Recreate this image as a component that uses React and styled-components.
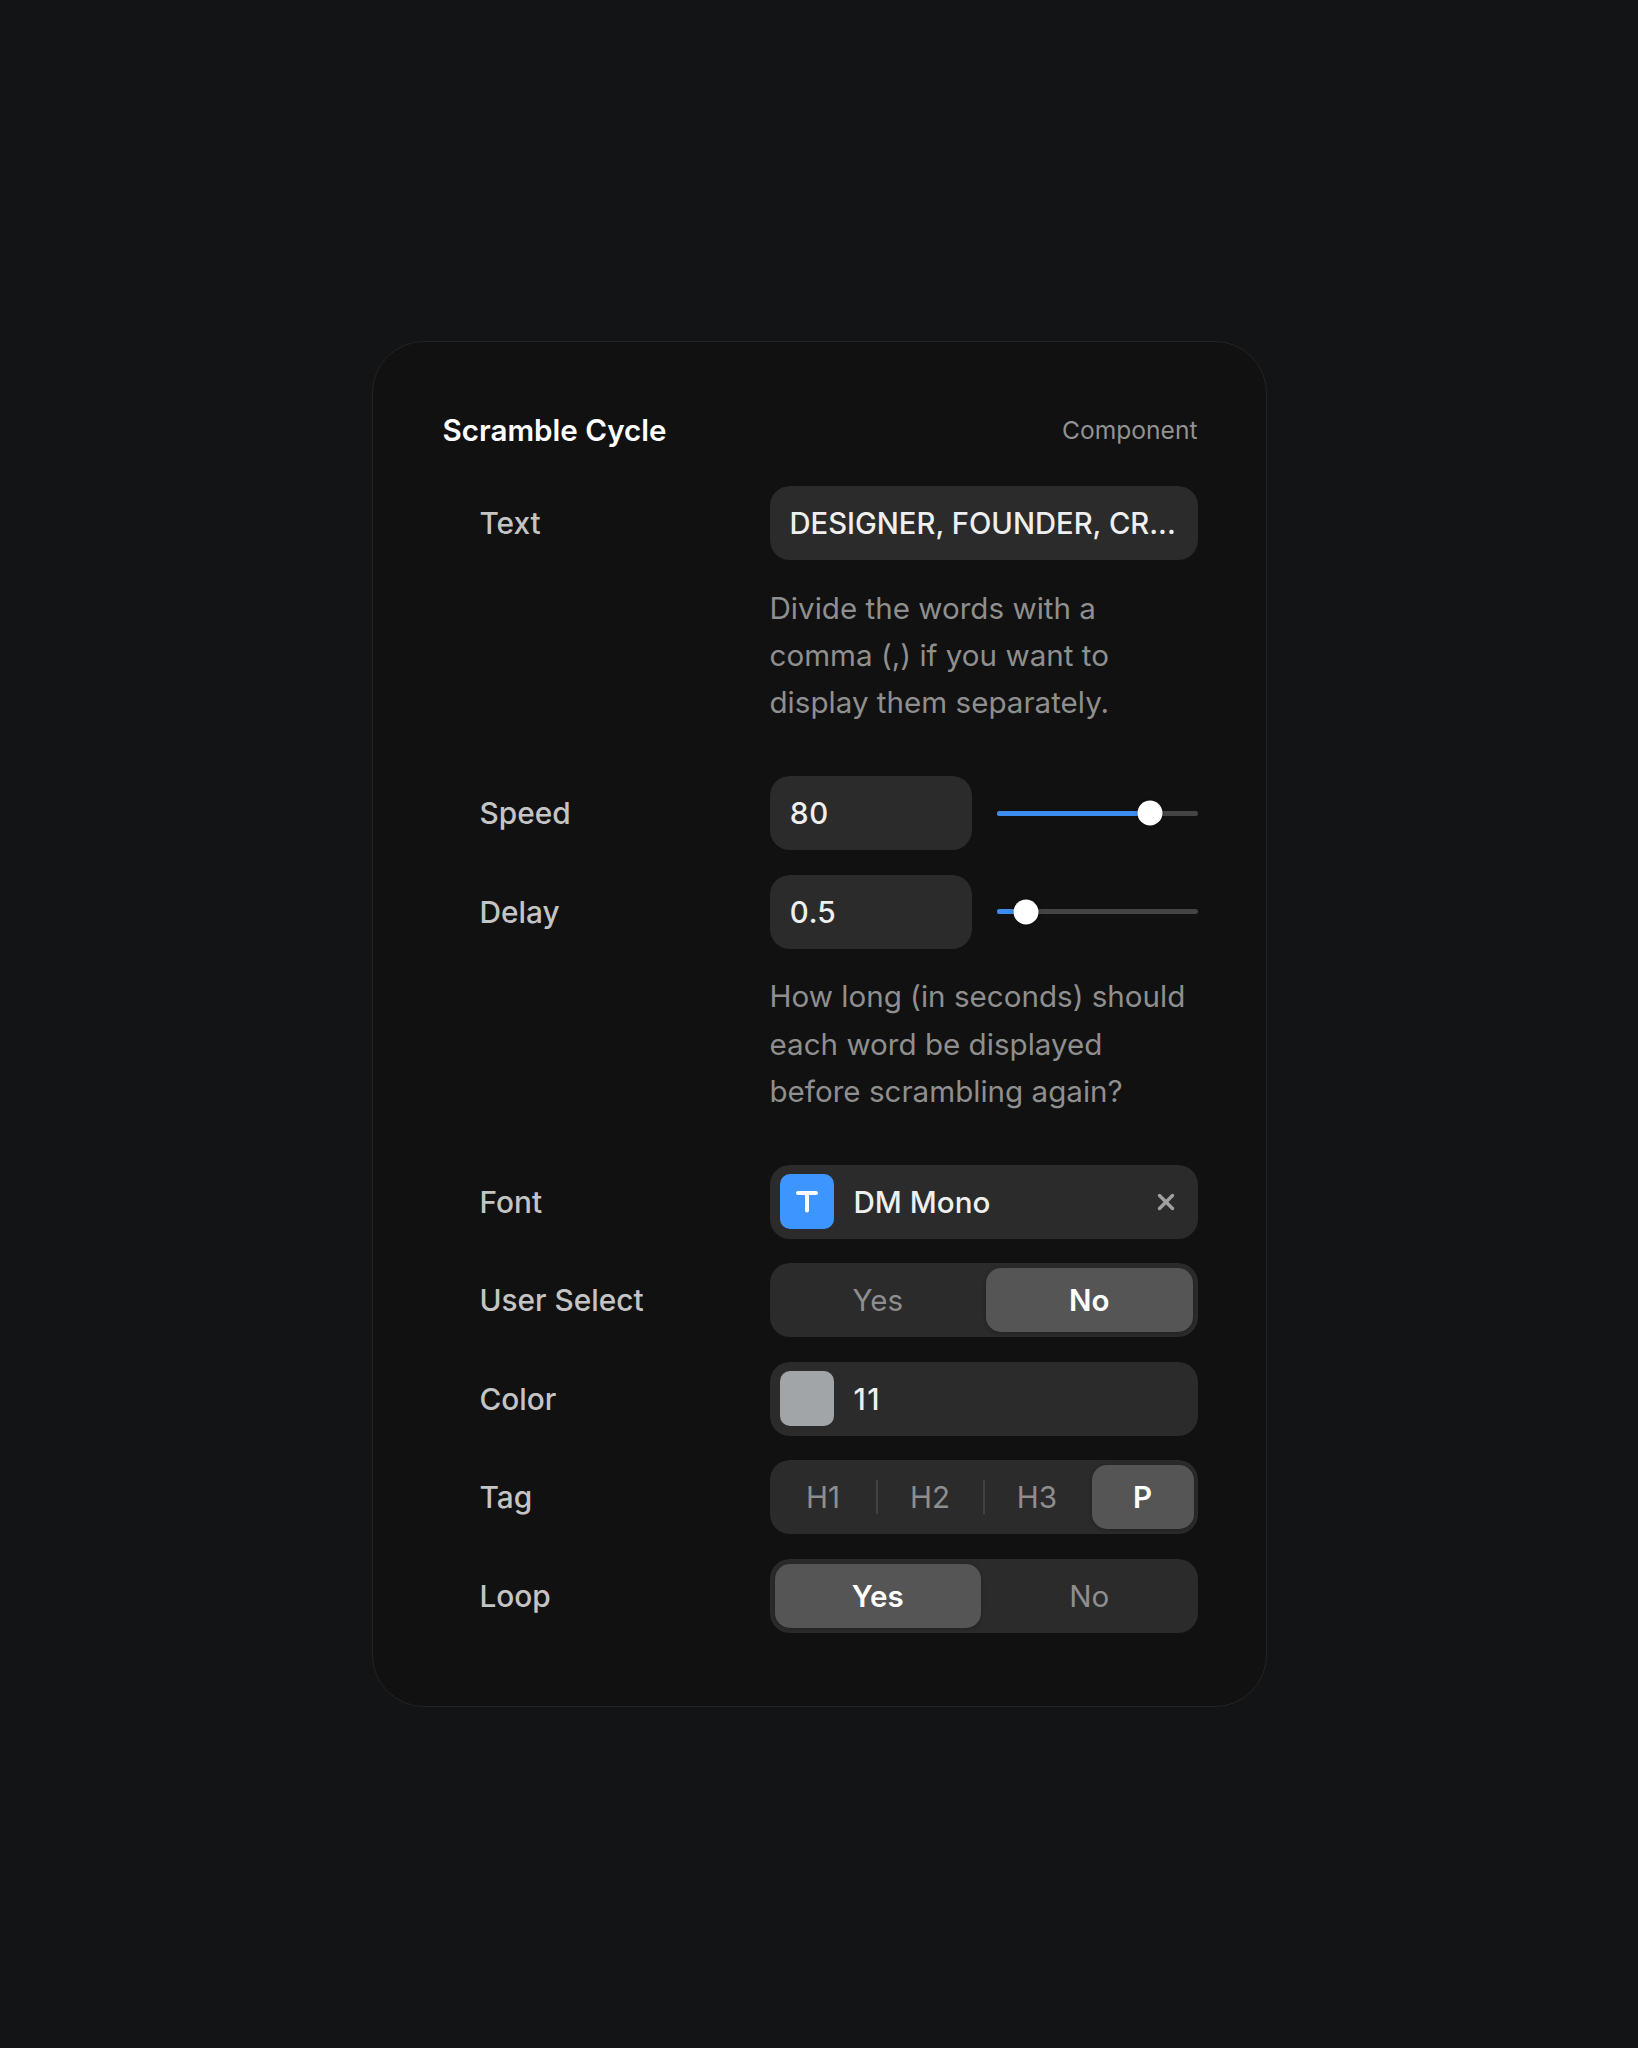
import React from 'react';
import styled, { createGlobalStyle } from 'styled-components';

const GlobalStyle = createGlobalStyle`
  html, body {
    margin: 0;
    background: #121416;
  }
`;

const Page = styled.div`
  width: 100%;
  height: 2048px;
  display: flex;
  align-items: center;
  justify-content: center;
  font-family: Inter, "Liberation Sans", sans-serif;
`;

const Card = styled.section`
  box-sizing: border-box;
  width: 895px;
  padding: 70px 68px 73.6px 70px;
  background: #111111;
  border: 1px solid #232427;
  border-radius: 52px;
`;

const Header = styled.header`
  display: flex;
  align-items: center;
  justify-content: space-between;
  height: 36px;
  margin-bottom: 38.5px;
`;

const Title = styled.h1`
  margin: 0;
  font-size: 29.6px;
  font-weight: 600;
  color: #ffffff;
`;

const Kind = styled.span`
  font-size: 24.6px;
  color: #929292;
`;

const Form = styled.div`
  display: flex;
  flex-direction: column;
  gap: 24.5px;
`;

const Row = styled.div`
  display: grid;
  grid-template-columns: 327px minmax(0, 1fr);
  align-items: center;
  min-height: 74px;
`;

const Label = styled.label`
  padding-left: 37px;
  font-size: 29.8px;
  font-weight: 450;
  color: #c4c4c4;
`;

const Field = styled.div`
  box-sizing: border-box;
  display: flex;
  align-items: center;
  height: 74px;
  padding: 0 20px;
  border-radius: 20px;
  background: #2b2b2b;
  font-size: 29.2px;
  font-weight: 450;
  white-space: nowrap;
  color: #efefef;
`;

const NumberField = styled(Field)`
  font-size: 30px;
  font-variant-numeric: tabular-nums;
`;

const Help = styled.p`
  margin: 0 0 25px 327px;
  font-size: 29.6px;
  line-height: 47.3px;
  color: #8f8f8f;
`;

const NumberGroup = styled.div`
  display: grid;
  grid-template-columns: 202px 1fr;
  gap: 25px;
  align-items: center;
`;

const Track = styled.div`
  position: relative;
  height: 5px;
  border-radius: 3px;
  background: #444444;
`;

const Fill = styled.div`
  height: 100%;
  width: ${(p) => p.$value}%;
  border-radius: 3px 0 0 3px;
  background: #3d8df0;
`;

const Thumb = styled.div`
  position: absolute;
  top: 50%;
  left: ${(p) => p.$value}%;
  width: 25px;
  height: 25px;
  border-radius: 50%;
  background: #ffffff;
  box-shadow: 0 0 3px rgba(0, 0, 0, 0.5);
  transform: translate(-50%, -50%);
`;

const PickerField = styled(Field)`
  padding: 0 23px 0 10px;
  gap: 20px;
  font-size: 29.6px;
`;

const Tile = styled.div`
  flex: none;
  display: flex;
  align-items: center;
  justify-content: center;
  width: 54px;
  height: 55px;
  border-radius: 10px;
  background: ${(p) => p.$color};
`;

const PickerName = styled.span`
  flex: 1;
  letter-spacing: ${(p) => (p.$numeric ? '1.5px' : 'normal')};
`;

const Segments = styled.div`
  box-sizing: border-box;
  display: grid;
  grid-template-columns: repeat(${(p) => p.$count}, 1fr);
  gap: 5px;
  height: 74px;
  padding: 5px;
  border-radius: 20px;
  background: #2b2b2b;
`;

const Segment = styled.div`
  display: flex;
  align-items: center;
  justify-content: center;
  border-radius: 15px;
  font-size: 29.6px;
  font-weight: ${(p) => (p.$active ? 600 : 400)};
  color: ${(p) => (p.$active ? '#ffffff' : '#8e8e8e')};
  background: ${(p) => (p.$active ? '#555555' : 'transparent')};
  box-shadow: ${(p) => (p.$active ? '0 1px 4px rgba(0, 0, 0, 0.25)' : 'none')};
`;

const TagBar = styled.div`
  box-sizing: border-box;
  display: grid;
  grid-template-columns: repeat(4, 1fr);
  height: 74px;
  border-radius: 20px;
  background: #2b2b2b;
`;

const TagCell = styled.div`
  position: relative;
  display: flex;
  align-items: center;
  justify-content: center;
  font-size: 29.6px;
  color: #8e8e8e;

  &:not(:last-child)::after {
    content: '';
    position: absolute;
    right: -1px;
    top: 20px;
    bottom: 20px;
    width: 2px;
    background: #424242;
  }

  &:nth-child(3)::after {
    display: none;
  }
`;

const TagActive = styled.div`
  align-self: stretch;
  flex: 1;
  display: flex;
  align-items: center;
  justify-content: center;
  margin: 5px 4px 5px 1px;
  border-radius: 15px;
  font-weight: 600;
  color: #ffffff;
  background: #555555;
  box-shadow: 0 1px 4px rgba(0, 0, 0, 0.25);
`;

const TIcon = () => (
  <svg width="24" height="23" viewBox="0 0 24 23" fill="none" stroke="#fff" strokeWidth="4" strokeLinecap="round">
    <path d="M3 3h18" />
    <path d="M12 3v17.5" />
  </svg>
);

const CloseIcon = () => (
  <svg width="18" height="18" viewBox="0 0 18 18" fill="none" stroke="#a0a0a0" strokeWidth="3.4" strokeLinecap="round">
    <path d="M2.5 2.5l13 13" />
    <path d="M15.5 2.5l-13 13" />
  </svg>
);

const Slider = ({ value }) => (
  <Track>
    <Fill $value={value} />
    <Thumb $value={value} />
  </Track>
);

const Toggle = ({ active }) => (
  <Segments $count={2}>
    <Segment $active={active === 'Yes'}>Yes</Segment>
    <Segment $active={active === 'No'}>No</Segment>
  </Segments>
);

const App = () => (
  <Page>
    <GlobalStyle />
    <Card>
      <Header>
        <Title>Scramble Cycle</Title>
        <Kind>Component</Kind>
      </Header>
      <Form>
        <Row>
          <Label>Text</Label>
          <Field>DESIGNER, FOUNDER, CR...</Field>
        </Row>
        <Help>
          Divide the words with a
          <br />
          comma (,) if you want to
          <br />
          display them separately.
        </Help>
        <Row>
          <Label>Speed</Label>
          <NumberGroup>
            <NumberField>80</NumberField>
            <Slider value={76.2} />
          </NumberGroup>
        </Row>
        <Row>
          <Label>Delay</Label>
          <NumberGroup>
            <NumberField>0.5</NumberField>
            <Slider value={14.8} />
          </NumberGroup>
        </Row>
        <Help>
          How long (in seconds) should
          <br />
          each word be displayed
          <br />
          before scrambling again?
        </Help>
        <Row>
          <Label>Font</Label>
          <PickerField>
            <Tile $color="#3d96ff">
              <TIcon />
            </Tile>
            <PickerName>DM Mono</PickerName>
            <CloseIcon />
          </PickerField>
        </Row>
        <Row>
          <Label>User Select</Label>
          <Toggle active="No" />
        </Row>
        <Row>
          <Label>Color</Label>
          <PickerField>
            <Tile $color="#a2a5a8" />
            <PickerName $numeric>11</PickerName>
          </PickerField>
        </Row>
        <Row>
          <Label>Tag</Label>
          <TagBar>
            <TagCell>H1</TagCell>
            <TagCell>H2</TagCell>
            <TagCell>H3</TagCell>
            <TagCell>
              <TagActive>P</TagActive>
            </TagCell>
          </TagBar>
        </Row>
        <Row>
          <Label>Loop</Label>
          <Toggle active="Yes" />
        </Row>
      </Form>
    </Card>
  </Page>
);

export default App;
